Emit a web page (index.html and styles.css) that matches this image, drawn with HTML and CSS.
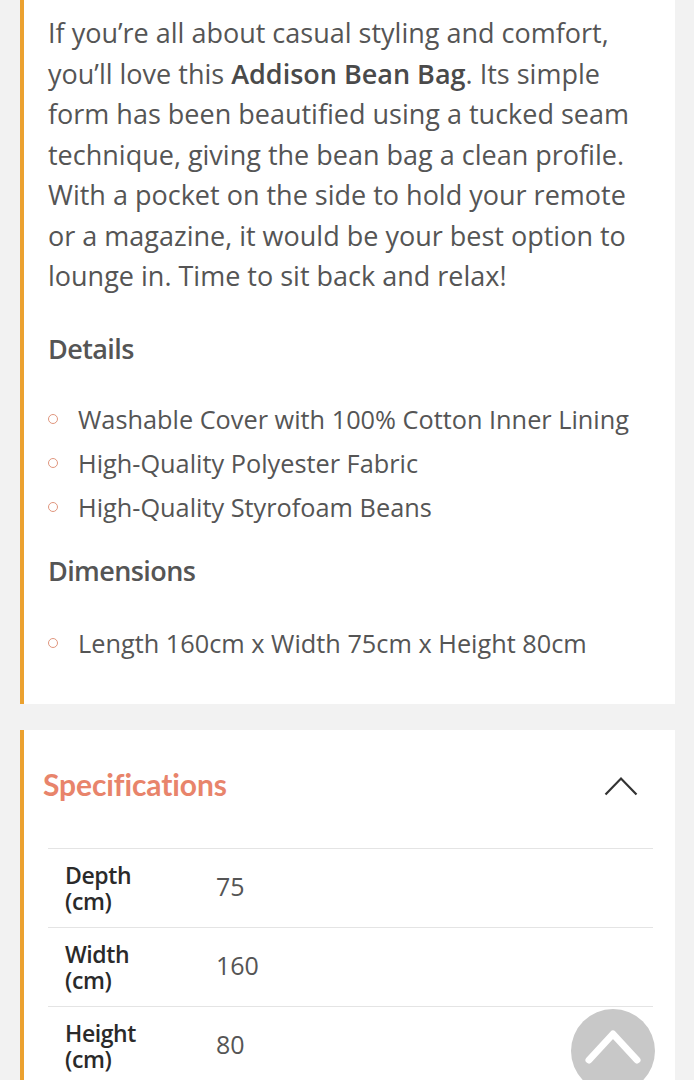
FILE: index.html
```html
<!DOCTYPE html>
<html lang="en">
<head>
<meta charset="utf-8">
<title>Addison Bean Bag</title>
<link rel="stylesheet" href="styles.css">
</head>
<body>
<main class="page">
  <section class="card card-desc">
    <p class="intro">If you’re all about casual styling and comfort, you’ll love this <strong>Addison Bean Bag</strong>. Its simple form has been beautified using a tucked seam technique, giving the bean bag a clean profile. With a pocket on the side to hold your remote or a magazine, it would be your best option to lounge in. Time to sit back and relax!</p>
    <h3 class="sub sub-details">Details</h3>
    <ul class="bullets">
      <li>Washable Cover with 100% Cotton Inner Lining</li>
      <li>High-Quality Polyester Fabric</li>
      <li>High-Quality Styrofoam Beans</li>
    </ul>
    <h3 class="sub sub-dims">Dimensions</h3>
    <ul class="bullets bullets-dims">
      <li>Length 160cm x Width 75cm x Height 80cm</li>
    </ul>
  </section>

  <section class="card card-spec">
    <div class="spec-head">
      <h2 class="spec-title">Specifications</h2>
      <svg class="chev" width="34" height="20" viewBox="0 0 34 20" aria-hidden="true"><polyline points="1.5,18.5 17,2.5 32.5,18.5" fill="none" stroke="#333" stroke-width="2.2"/></svg>
    </div>
    <table class="spec-table">
      <tr><th>Depth<br>(cm)</th><td>75</td></tr>
      <tr><th>Width<br>(cm)</th><td>160</td></tr>
      <tr><th>Height<br>(cm)</th><td>80</td></tr>
    </table>
  </section>
</main>
<button class="to-top" aria-label="Back to top">
  <svg width="84" height="84" viewBox="0 0 84 84" aria-hidden="true"><polyline points="18,51 42,25 66,51" fill="none" stroke="#fff" stroke-width="7" stroke-linecap="round" stroke-linejoin="round"/></svg>
</button>
</body>
</html>
```

FILE: styles.css
```css
html, body {
  margin: 0;
  padding: 0;
  background: #f2f2f2;
}
body {
  font-family: "Open Sans", "Noto Sans", sans-serif;
  color: #555;
  height: 1080px;
  overflow: hidden;
}
.page {
  display: flex;
  flex-direction: column;
  gap: 26px;
}
.card {
  background: #fff;
  border-left: 4px solid #eba12f;
  margin: 0 19px 0 20px;
}
.card-desc {
  padding: 13px 30px 39px 24px;
}
.intro {
  margin: 0;
  font-size: 27px;
  line-height: 40.5px;
  color: #555;
}
.intro strong {
  font-weight: 600;
  color: #4a4a4a;
}
.sub {
  margin: 0;
  font-size: 27px;
  line-height: 36px;
  font-weight: 600;
  letter-spacing: -0.6px;
  color: #555;
}
.sub-details { margin-top: 34px; }
.sub-dims { margin-top: 24px; }
.bullets {
  list-style: none;
  margin: 30px 0 0;
  padding: 0;
}
.bullets-dims { margin-top: 32px; }
.bullets li {
  display: flex;
  align-items: center;
  gap: 20px;
  font-size: 25.3px;
  line-height: 44px;
  color: #555;
}
.bullets li::before {
  content: "";
  flex: none;
  width: 8px;
  height: 8px;
  margin-top: 1px;
  border: 1.5px solid #e0967e;
  border-radius: 50%;
}
.card-spec {
  padding: 0 22px 40px 24px;
}
.spec-head {
  display: flex;
  align-items: center;
  justify-content: space-between;
  height: 108px;
  padding: 0 15px 10px 0;
}
.spec-title {
  margin: 0 0 0 -5px;
  font-family: "Lato", "Open Sans", sans-serif;
  font-weight: 700;
  font-size: 30px;
  letter-spacing: -0.1px;
  color: #e8846b;
}
.chev {
  display: block;
  margin-top: 4px;
}
.spec-table {
  width: 100%;
  border-collapse: collapse;
  border-top: 1px solid #e4e4e4;
}
.spec-table tr {
  height: 79px;
  border-bottom: 1px solid #e4e4e4;
}
.spec-table th {
  width: 151px;
  padding: 0 0 0 17px;
  text-align: left;
  font-weight: 600;
  font-size: 23px;
  line-height: 26px;
  letter-spacing: -0.4px;
  color: #2a2a2a;
}
.spec-table td {
  padding: 0 0 3px;
  font-size: 25px;
  color: #555;
}
.to-top {
  position: fixed;
  left: 571px;
  top: 1009px;
  width: 84px;
  height: 84px;
  padding: 0;
  border: none;
  border-radius: 50%;
  background: #c8c8c8;
}
.to-top svg { display: block; }
```
